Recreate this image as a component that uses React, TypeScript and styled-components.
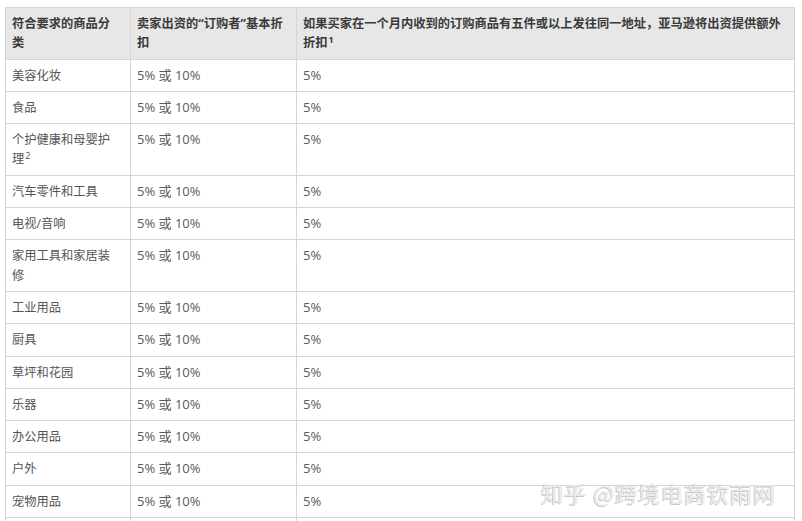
import React from "react";
import styled, { createGlobalStyle } from "styled-components";

const GlobalStyle = createGlobalStyle`
  html, body {
    margin: 0;
    padding: 0;
    background: #ffffff;
  }
  body {
    font-family: "Open Sans", "Noto Sans CJK SC", sans-serif;
  }
`;

const Page = styled.div`
  position: relative;
  width: 802px;
  height: 521px;
  overflow: hidden;
  padding: 7px 0 0 5px;
  box-sizing: border-box;
  background: #fff;
`;

const Table = styled.table`
  width: 790px;
  border-collapse: collapse;
  table-layout: fixed;
  border: 1px solid #d6d6d6;
  font-size: 12.25px;
  line-height: 19.3px;
  color: #555;
`;

const HeadRow = styled.tr`
  background: #e7e7e7;
`;

const HeadCell = styled.th`
  text-align: left;
  vertical-align: top;
  font-weight: 700;
  color: #3a3a3a;
  padding: 6px 11px 6px 6px;
  border: 1px solid #d6d6d6;
`;

const Cell = styled.td`
  vertical-align: top;
  padding: 6px 11px 6px 6px;
  height: 19.3px;
  border: 1px solid #d6d6d6;
`;

const Rate = styled.span`
  font-size: 13px;
  color: #5a5a5a;
`;

const Sup = styled.sup`
  font-size: 9px;
  line-height: 0;
  vertical-align: 4px;
  margin-left: 1px;
`;

const Watermark = styled.div`
  position: absolute;
  left: 541px;
  top: 478px;
  font-family: "Noto Sans CJK SC", sans-serif;
  font-size: 22px;
  line-height: 28px;
  letter-spacing: 1px;
  color: rgba(238, 238, 238, 0.9);
  text-shadow: -1px 1px 0 rgba(110, 110, 110, 0.4), 1px 0 0 rgba(150, 150, 150, 0.22);
  white-space: nowrap;
  pointer-events: none;
`;

type Row = { name: React.ReactNode; base: string; extra: string };

const rows: Row[] = [
  { name: "美容化妆", base: "5% 或 10%", extra: "5%" },
  { name: "食品", base: "5% 或 10%", extra: "5%" },
  {
    name: (
      <>
        个护健康和母婴护理<Sup>2</Sup>
      </>
    ),
    base: "5% 或 10%",
    extra: "5%",
  },
  { name: "汽车零件和工具", base: "5% 或 10%", extra: "5%" },
  { name: "电视/音响", base: "5% 或 10%", extra: "5%" },
  { name: "家用工具和家居装修", base: "5% 或 10%", extra: "5%" },
  { name: "工业用品", base: "5% 或 10%", extra: "5%" },
  { name: "厨具", base: "5% 或 10%", extra: "5%" },
  { name: "草坪和花园", base: "5% 或 10%", extra: "5%" },
  { name: "乐器", base: "5% 或 10%", extra: "5%" },
  { name: "办公用品", base: "5% 或 10%", extra: "5%" },
  { name: "户外", base: "5% 或 10%", extra: "5%" },
  { name: "宠物用品", base: "5% 或 10%", extra: "5%" },
  { name: "", base: "", extra: "" },
];

export default function App() {
  return (
    <>
      <GlobalStyle />
      <Page>
        <Table>
          <colgroup>
            <col style={{ width: 125 }} />
            <col style={{ width: 166 }} />
            <col />
          </colgroup>
          <thead>
            <HeadRow>
              <HeadCell>符合要求的商品分类</HeadCell>
              <HeadCell>卖家出资的“订购者”基本折扣</HeadCell>
              <HeadCell>
                如果买家在一个月内收到的订购商品有五件或以上发往同一地址，亚马逊将出资提供额外折扣<Sup>1</Sup>
              </HeadCell>
            </HeadRow>
          </thead>
          <tbody>
            {rows.map((r, i) => (
              <tr key={i}>
                <Cell>{r.name}</Cell>
                <Cell>
                  <Rate>{r.base}</Rate>
                </Cell>
                <Cell>
                  <Rate>{r.extra}</Rate>
                </Cell>
              </tr>
            ))}
          </tbody>
        </Table>
        <Watermark>知乎 @跨境电商钦雨网</Watermark>
      </Page>
    </>
  );
}
